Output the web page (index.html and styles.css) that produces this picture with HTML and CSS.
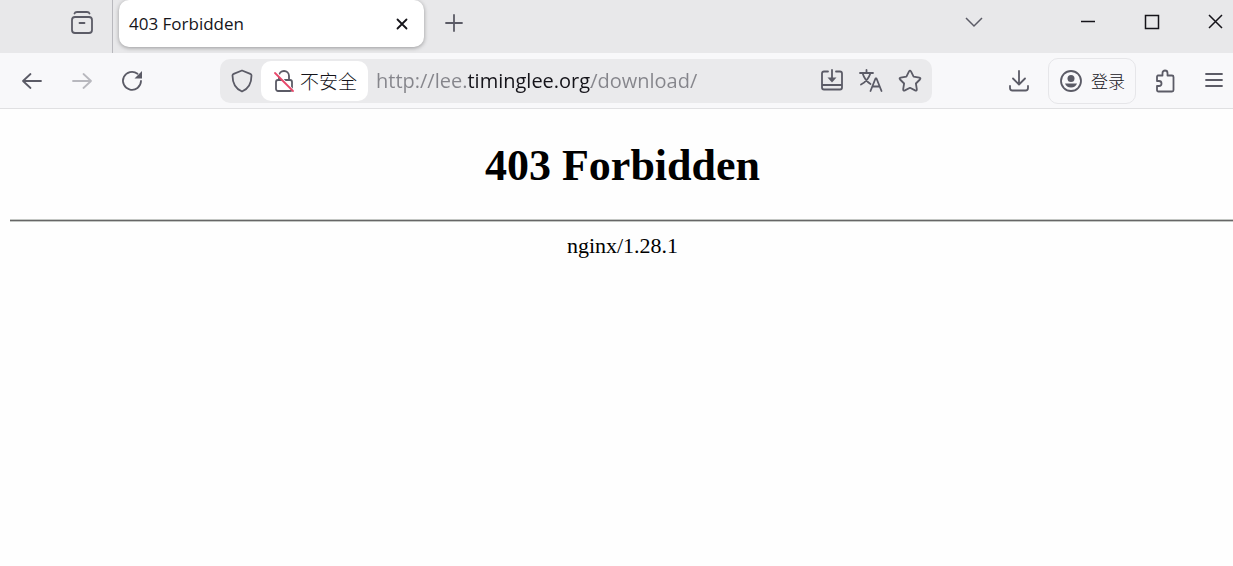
FILE: index.html
```html
<!DOCTYPE html>
<html lang="zh-CN">
<head>
  <meta charset="utf-8">
  <title>403 Forbidden</title>
  <link rel="stylesheet" href="styles.css">
</head>
<body>
  <header class="browser">
    <div class="tabbar">
      <div class="tabbar-start">
        <button class="icon-btn" aria-label="Firefox View">
          <svg width="26" height="26" viewBox="0 0 26 26"><path d="M5.500 3.500Q6 2 8 2h10Q20 2 20.500 3.500"/><rect x="3" y="7" width="20" height="16" rx="3"/><path d="M10.500 13h5"/></svg>
        </button>
      </div>
      <div class="tab">
        <span>403 Forbidden</span>
        <button class="icon-btn tab-close" aria-label="关闭标签页">
          <svg width="12" height="12" viewBox="0 0 12 12"><path d="M1.500 1.500l9 9M10.500 1.500l-9 9"/></svg>
        </button>
      </div>
      <button class="icon-btn new-tab" aria-label="新建标签页">
        <svg width="18" height="18" viewBox="0 0 18 18"><path d="M9 1v16M1 9h16"/></svg>
      </button>
      <div class="window-controls">
        <button class="icon-btn list-tabs" aria-label="列出所有标签页">
          <svg width="18" height="12" viewBox="0 0 18 12"><path d="M1 2l8 8 8-8"/></svg>
        </button>
        <button class="icon-btn" aria-label="最小化">
          <svg width="16" height="16" viewBox="0 0 16 16"><path d="M1 7.500h14"/></svg>
        </button>
        <button class="icon-btn" aria-label="最大化">
          <svg width="16" height="16" viewBox="0 0 16 16"><rect x="1.500" y="1.500" width="13" height="13"/></svg>
        </button>
        <button class="icon-btn" aria-label="关闭">
          <svg width="16" height="16" viewBox="0 0 16 16"><path d="M1 1l13 13M14 1L1 14"/></svg>
        </button>
      </div>
    </div>

    <div class="toolbar">
      <div class="nav-buttons">
        <button class="icon-btn" aria-label="后退">
          <svg width="22" height="22" viewBox="0 0 22 22"><path d="M20 11H2M9.500 4L2 11l7.500 7"/></svg>
        </button>
        <button class="icon-btn" aria-label="前进" disabled>
          <svg width="22" height="22" viewBox="0 0 22 22"><path d="M2 11h18M12.500 4l7.500 7-7.500 7"/></svg>
        </button>
        <button class="icon-btn" aria-label="刷新">
          <svg width="22" height="22" viewBox="0 0 22 22"><path d="M20 11a9 9 0 1 1-3.500-7.300"/><path class="solid" d="M21 1v7.500h-7.500z"/></svg>
        </button>
      </div>

      <div class="urlbar">
        <button class="icon-btn shield" aria-label="跟踪保护">
          <svg width="24" height="24" viewBox="0 0 24 24"><path d="M12 1.500l8.300 3.300Q21.500 5.300 21.500 6.500C21.500 14 18 20 12 22.500 6 20 2.500 14 2.500 6.500q0-1.200 1.200-1.700z"/></svg>
        </button>
        <button class="not-secure">
          <svg width="22" height="24" viewBox="0 0 22 24"><path d="M6 11V7a5 5 0 0 1 10 0v4"/><rect x="3" y="11" width="16" height="11" rx="2"/><path class="gap" d="M3 3l18 19"/><path class="slash" d="M2 4l18 18"/></svg>
          不安全
        </button>
        <input class="url" type="text" value="http://lee.timinglee.org/download/" aria-label="地址" spellcheck="false">
        <div class="page-actions">
          <button class="icon-btn" aria-label="安装">
            <svg width="24" height="24" viewBox="0 0 24 24"><path d="M8 2.500H4q-2 0-2 2v14q0 2 2 2h16q2 0 2-2v-14q0-2-2-2h-4M2 16h20M12 1v10"/><path class="solid" d="M7.500 8.500h9L12 13.500z"/></svg>
          </button>
          <button class="icon-btn" aria-label="翻译此页面">
            <svg width="24" height="24" viewBox="0 0 24 24"><path d="M1 4h13M7.500 1v3M11.500 4C10 9 7 13 2 15.500M3.500 4C5 9 7.500 12.500 11.500 15M11.500 22l5-12.500h1l5 12.500M13.500 17.500h7"/></svg>
          </button>
          <button class="icon-btn" aria-label="添加书签">
            <svg width="24" height="24" viewBox="0 0 24 24"><path d="M10.900 2.600q1.100-1.800 2.200 0l2.500 5.100 5.700.9q1.900.4.600 1.900l-4 4 .9 5.700q.1 2-1.700 1.200L12 18.800l-5.100 2.600q-1.800.8-1.700-1.200l.9-5.700-4-4q-1.300-1.500.6-1.900l5.700-.9z"/></svg>
          </button>
        </div>
      </div>

      <div class="tools">
        <button class="icon-btn" aria-label="下载">
          <svg width="22" height="24" viewBox="0 0 22 24"><path d="M11 2v13M5 9.500l6 6 6-6M2 17v2q0 2.500 2.500 2.500h13q2.500 0 2.500-2.500v-2"/></svg>
        </button>
        <button class="sign-in">
          <svg width="24" height="24" viewBox="0 0 24 24"><circle cx="12" cy="12" r="10"/><circle class="solid" cx="12" cy="9.500" r="3.500"/><path class="solid" d="M6 14.500h12q-1.500 4-6 4t-6-4z"/></svg>
          登录
        </button>
        <button class="icon-btn" aria-label="扩展">
          <svg width="22" height="24" viewBox="0 0 22 24"><path d="M4 6.500h4.500V4a2.500 2.500 0 0 1 5 0v2.500H18q1.500 0 1.500 1.500v13q0 1.500-1.500 1.500H4.500Q3 22.500 3 21v-4h2a2.500 2.500 0 0 0 0-5H3V8q0-1.500 1-1.500z"/></svg>
        </button>
        <button class="icon-btn menu-btn" aria-label="菜单">
          <svg width="20" height="20" viewBox="0 0 20 20"><path d="M2 3h16M2 9h16M2 15h16"/></svg>
        </button>
      </div>
    </div>
  </header>

  <main class="page">
    <h1>403 Forbidden</h1>
    <hr>
    <p>nginx/1.28.1</p>
  </main>
</body>
</html>
```
FILE: styles.css
```css
* {
  box-sizing: border-box;
}
body {
  margin: 0;
  background-color: #fefefe;
}
.browser {
  font-family: "Open Sans", "Noto Sans CJK SC", sans-serif;
  color: #15141a;
}
button {
  margin: 0;
  padding: 0;
  border: none;
  background: none;
  font-family: inherit;
  font-weight: 300;
  color: inherit;
  cursor: pointer;
}
svg {
  display: block;
  flex: none;
  fill: none;
  stroke: #5b5b66;
  stroke-width: 1.8;
  stroke-linecap: round;
  stroke-linejoin: round;
}
.solid {
  fill: #5b5b66;
  stroke: none;
}
.icon-btn {
  display: flex;
  flex: none;
  align-items: center;
  justify-content: center;
  width: 34px;
  height: 34px;
}
.icon-btn:disabled {
  opacity: 0.4;
}

/* tab strip */
.tabbar {
  display: flex;
  height: 53px;
  background-color: #e8e8ea;
}
.tabbar-start {
  display: flex;
  justify-content: flex-end;
  width: 113px;
  padding: 6px 13px;
  border-right: 1px solid #b8b8bd;
}
.tab {
  display: flex;
  align-items: center;
  justify-content: space-between;
  width: 305px;
  height: 47px;
  margin-left: 6px;
  padding: 0 5px 0 10px;
  border-radius: 10px;
  background-color: #fff;
  box-shadow: 0 1px 4px rgba(0, 0, 0, 0.35);
  font-size: 17px;
  line-height: 22px;
}
.tab-close svg {
  stroke: #15141a;
}
.new-tab {
  margin: 6px 0 0 13px;
}
.window-controls {
  display: flex;
  gap: 30px;
  margin-left: auto;
  padding-top: 5px;
}
.window-controls svg {
  stroke: #15141a;
  stroke-width: 1.5;
  stroke-linecap: butt;
  stroke-linejoin: miter;
}
.window-controls .list-tabs {
  margin-right: 50px;
}
.window-controls .list-tabs svg {
  stroke: #5b5b66;
}

/* navigation toolbar */
.toolbar {
  display: flex;
  align-items: center;
  height: 56px;
  padding: 0 2px 0 15px;
  border-bottom: 1px solid #e0e0e2;
  background-color: #f8f8fa;
}
.nav-buttons {
  display: flex;
  gap: 16px;
}
.urlbar {
  display: flex;
  flex: 1;
  align-items: center;
  height: 44px;
  margin: 0 70px 0 71px;
  padding: 0 5px;
  border-radius: 10px;
  background-color: #eaeaec;
}
.shield {
  margin-right: 2px;
}
.not-secure {
  display: flex;
  flex: none;
  align-items: center;
  gap: 5px;
  height: 40px;
  padding: 0 11px 0 12px;
  border-radius: 10px;
  background-color: #fff;
  font-size: 19px;
}
.gap {
  stroke: #fff;
}
.slash {
  stroke: #e8476a;
}
.url {
  flex: 1;
  min-width: 0;
  height: 40px;
  margin-left: 8px;
  padding: 0;
  border: none;
  outline: none;
  font-family: inherit;
  font-size: 20px;
  /* only the host is dark, the rest of the address is grey */
  background: linear-gradient(to right, #85858b 91px, #15141a 91px, #15141a 215px, #85858b 215px);
  -webkit-background-clip: text;
  background-clip: text;
  color: transparent;
}
.page-actions {
  display: flex;
  gap: 5px;
}
.tools {
  display: flex;
  align-items: center;
  gap: 12px;
}
.sign-in {
  display: flex;
  align-items: center;
  gap: 8px;
  height: 46px;
  padding: 0 10px;
  border: 1px solid #e6e6e9;
  border-radius: 10px;
  font-size: 17px;
}
.menu-btn {
  margin-left: 3px;
}

/* nginx error page */
.page {
  padding: 32px 0 0 12px;
  font-family: "Liberation Serif", serif;
  font-size: 22px;
  text-align: center;
  color: #000;
}
.page h1 {
  margin: 0;
  font-size: 44px;
  line-height: 50px;
}
.page hr {
  height: 3px;
  margin: 28px 0 11px -2px;
  border: solid #c4c7c4;
  border-width: 1px 0;
  background-color: #666;
}
.page p {
  margin: 0;
  line-height: 25px;
}
```
